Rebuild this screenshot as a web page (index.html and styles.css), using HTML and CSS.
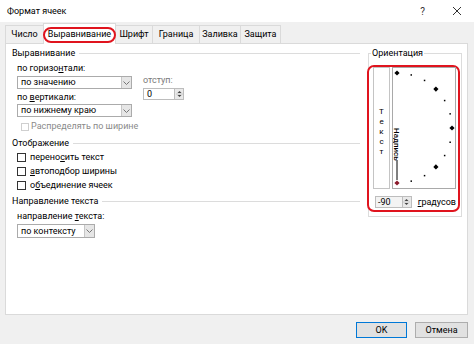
FILE: index.html
```html
<!DOCTYPE html>
<html lang="ru">
<head>
  <meta charset="UTF-8" />
  <title>Формат ячеек</title>
  <link rel="stylesheet" href="styles.css">
</head>
<body>
  <div class="dialog">
    <div class="titlebar">
      <span class="title">Формат ячеек</span>
      <div class="title-btns">
        <span class="help">?</span>
        <svg class="close" width="10" height="10" viewBox="0 0 10 10"><path d="M1 1L9 9M9 1L1 9" stroke="#333" stroke-width="1" fill="none"/></svg>
      </div>
    </div>

    <div class="tabs">
      <div class="tab tab-num">Число</div>
      <div class="tab tab-align active">Выравнивание</div>
      <div class="tab tab-font">Шрифт</div>
      <div class="tab tab-border">Граница</div>
      <div class="tab tab-fill">Заливка</div>
      <div class="tab tab-protect">Защита</div>
    </div>

    <div class="panel">
      <div class="left">
        <div class="group-head">Выравнивание</div>
        <div class="align-row">
          <div class="align-main">
            <div class="lbl">по горизо<u>н</u>тали:</div>
            <div class="select"><span>по значению</span><i class="drop"><svg width="7" height="4" viewBox="0 0 7 4"><path d="M0.5 0.5L3.5 3.5L6.5 0.5" stroke="#777" fill="none"/></svg></i></div>
            <div class="lbl lbl-gap">по <u>в</u>ертикали:</div>
            <div class="select select-tight"><span>по нижнему краю</span><i class="drop"><svg width="7" height="4" viewBox="0 0 7 4"><path d="M0.5 0.5L3.5 3.5L6.5 0.5" stroke="#777" fill="none"/></svg></i></div>
          </div>
          <div class="indent">
            <div class="lbl muted">отступ:</div>
            <div class="spin">
              <span class="spin-field">0</span>
              <i class="arrows"><svg width="7" height="10" viewBox="0 0 7 10"><path d="M1.5 4L3.5 2L5.5 4Z M1.5 6L3.5 8L5.5 6Z" fill="#444"/><path d="M0 5H7" stroke="#c8c8c8"/></svg></i>
            </div>
          </div>
        </div>
        <div class="check disabled"><i class="box"></i><span>Распределять по ширине</span></div>

        <div class="group-head head-gap">Отображение</div>
        <div class="check"><i class="box"></i><span>перено<u>с</u>ить текст</span></div>
        <div class="check"><i class="box"></i><span><u>а</u>втоподбор ширины</span></div>
        <div class="check"><i class="box"></i><span>о<u>б</u>ъединение ячеек</span></div>

        <div class="group-head head-gap-sm">Направление текста</div>
        <div class="lbl">направление <u>т</u>екста:</div>
        <div class="select select-short"><span>по контексту</span><i class="drop"><svg width="7" height="4" viewBox="0 0 7 4"><path d="M0.5 0.5L3.5 3.5L6.5 0.5" stroke="#777" fill="none"/></svg></i></div>
      </div>

      <div class="right">
        <div class="orient">
          <div class="orient-head">Ориентация</div>
          <div class="highlight">
            <div class="orient-boxes">
              <div class="vtext"><span>Т</span><span>е</span><span>к</span><span>с</span><span>т</span></div>
              <div class="dial">
                <svg width="62" height="120" viewBox="0 0 62 120">
                  <g fill="#000">
                    <path d="M4 2.4L6.6 5L4 7.6L1.4 5Z"/>
                    <path d="M42.9 18.5L45.5 21.1L42.9 23.7L40.3 21.1Z"/>
                    <path d="M59 57.4L61.6 60L59 62.6L56.4 60Z"/>
                    <path d="M42.9 96.3L45.5 98.9L42.9 101.5L40.3 98.9Z"/>
                    <rect x="17.5" y="6.2" width="1.5" height="1.5"/>
                    <rect x="30.8" y="11.7" width="1.5" height="1.5"/>
                    <rect x="50.9" y="31.8" width="1.5" height="1.5"/>
                    <rect x="56.4" y="45.1" width="1.5" height="1.5"/>
                    <rect x="56.4" y="73.5" width="1.5" height="1.5"/>
                    <rect x="50.9" y="86.8" width="1.5" height="1.5"/>
                    <rect x="30.8" y="106.9" width="1.5" height="1.5"/>
                    <rect x="17.5" y="112.4" width="1.5" height="1.5"/>
                  </g>
                  <path d="M4 92V112" stroke="#000" stroke-width="1"/>
                  <path d="M4 112.4L6.6 115L4 117.6L1.4 115Z" fill="#8b1a2b"/>
                  <text class="dial-text" transform="translate(0.5 60) rotate(90)">Надпись</text>
                </svg>
              </div>
            </div>
            <div class="deg-row">
              <span class="deg-field">-90</span>
              <i class="arrows"><svg width="7" height="10" viewBox="0 0 7 10"><path d="M1.5 4L3.5 2L5.5 4Z M1.5 6L3.5 8L5.5 6Z" fill="#444"/><path d="M0 5H7" stroke="#c8c8c8"/></svg></i>
              <span class="deg-label"><u>г</u>радусов</span>
            </div>
          </div>
        </div>
      </div>
    </div>

    <div class="footer">
      <button class="btn primary">OK</button>
      <button class="btn wide">Отмена</button>
    </div>
  </div>
</body>
</html>
```

FILE: styles.css
```css
* {
  box-sizing: border-box;
}

body {
  margin: 0;
  font-family: Roboto, "Noto Sans", sans-serif;
  font-size: 9px;
  color: #000;
  background: #fff;
}

u {
  text-decoration-thickness: 1px;
}

.dialog {
  width: 474px;
  height: 344px;
  display: flex;
  flex-direction: column;
  background: #f0f0f0;
}

.titlebar {
  height: 22px;
  flex: none;
  background: #fff;
  display: flex;
  align-items: center;
  justify-content: space-between;
  padding: 0 12px 0 7px;
}

.title-btns {
  display: flex;
  align-items: center;
  gap: 27px;
}

.help {
  font-size: 10px;
  color: #333;
}

.close {
  display: block;
}

/* tabs */
.tabs {
  height: 21px;
  flex: none;
  display: flex;
  align-items: flex-end;
  padding-left: 5px;
}

.tab {
  height: 18px;
  line-height: 17px;
  text-align: center;
  border: 1px solid #dadada;
  border-bottom: none;
  margin-right: -1px;
  background: #f0f0f0;
}

.tab-num { width: 39px; }
.tab-align { width: 73px; }
.tab-font { width: 38px; }
.tab-border { width: 48px; }
.tab-fill { width: 42px; }
.tab-protect { width: 41px; }

.tab.active {
  height: 21px;
  padding-top: 2px;
  background: #fff;
  position: relative;
  z-index: 1;
  margin-bottom: -1px;
}

.tab.active::after {
  content: "";
  position: absolute;
  left: -1px;
  right: -1px;
  top: 3px;
  bottom: 1px;
  border: 2px solid #e0141e;
  border-radius: 8px;
}

/* main panel */
.panel {
  flex: 1;
  margin: 0 6px 0 5px;
  background: #fff;
  border: 1px solid #dadada;
  display: flex;
}

.left {
  width: 354px;
  padding: 3px 0 0 6px;
  display: flex;
  flex-direction: column;
}

.group-head {
  display: flex;
  align-items: center;
  gap: 4px;
  line-height: 13px;
}

.group-head::after {
  content: "";
  flex: 1;
  height: 1px;
  background: #dcdcdc;
}

.head-gap {
  margin-top: 4px;
}

.head-gap-sm {
  margin-top: 3px;
}

.lbl {
  line-height: 13px;
  padding-left: 5px;
  margin-top: 2px;
}

.lbl.muted {
  color: #7a7a7a;
  padding-left: 0;
  margin-top: 0;
}

.align-row {
  display: flex;
}

.align-main {
  width: 120px;
  display: flex;
  flex-direction: column;
}

.select {
  height: 13px;
  width: 115px;
  margin: 1px 0 0 5px;
  border: 1px solid #ababab;
  background: #fff;
  display: flex;
  align-items: center;
  justify-content: space-between;
  padding-left: 3px;
  line-height: 11px;
}

.select-tight {
  margin-top: 0;
}

.select-short {
  width: 78px;
  height: 14px;
}

.drop {
  width: 10px;
  height: 100%;
  border-left: 1px solid #c6c6c6;
  background: #e6e6e6;
  display: flex;
  align-items: center;
  justify-content: center;
}

.indent {
  margin-left: 11px;
  padding-top: 14px;
}

.spin {
  display: flex;
  height: 12px;
  margin-top: 1px;
}

.spin-field {
  width: 32px;
  border: 1px solid #bdbdbd;
  padding-left: 3px;
  line-height: 10px;
}

.arrows {
  width: 9px;
  border: 1px solid #bdbdbd;
  border-left: none;
  background: #e9e9e9;
  display: flex;
  align-items: center;
  justify-content: center;
}

.check {
  display: flex;
  align-items: center;
  gap: 4px;
  line-height: 13px;
  padding-left: 5px;
  margin-top: 1px;
}

.box {
  width: 9px;
  height: 9px;
  border: 1px solid #333;
  background: #fff;
}

.check.disabled {
  color: #8a8a8a;
  padding-left: 9px;
  gap: 2px;
  margin-top: 3px;
}

.check.disabled .box {
  width: 8px;
  height: 8px;
  border-color: #cfcfcf;
}

/* orientation */
.right {
  width: 94px;
  margin-left: 8px;
  padding-top: 9px;
}

.orient {
  border: 1px solid #dcdcdc;
  padding-bottom: 4px;
}

.orient-head {
  display: inline-block;
  line-height: 13px;
  margin: -7px 0 0 2px;
  padding: 0 1px;
  background: #fff;
  vertical-align: top;
}

.highlight {
  width: 93px;
  margin: 1px 0 0 -2px;
  border: 2px solid #e0141e;
  border-radius: 7px;
  padding: 0 2px 2px 4px;
}

.orient-boxes {
  display: flex;
  gap: 2px;
  height: 122px;
}

.vtext {
  width: 17px;
  border: 1px solid #c4c4c4;
  display: flex;
  flex-direction: column;
  align-items: center;
  justify-content: center;
  padding-top: 8px;
  font-size: 8px;
  line-height: 10px;
}

.dial {
  width: 64px;
  border: 1px solid #a9a9a9;
}

.dial svg {
  display: block;
}

.dial-text {
  font-family: Roboto, "Noto Sans", sans-serif;
  font-size: 8px;
  font-weight: 500;
}

.deg-row {
  display: flex;
  height: 12px;
  margin-top: 7px;
  padding-left: 2px;
}

.deg-field {
  width: 28px;
  border: 1px solid #bdbdbd;
  padding-left: 2px;
  line-height: 10px;
  background: #f3f3f3;
}

.deg-label {
  margin-left: 6px;
  line-height: 12px;
}

/* footer */
.footer {
  height: 29px;
  flex: none;
  display: flex;
  justify-content: flex-end;
  align-items: flex-start;
  gap: 8px;
  padding: 7px 6px 0 0;
}

.btn {
  width: 51px;
  height: 16px;
  padding: 0;
  border: 1px solid #adadad;
  background: #e1e1e1;
  font-family: inherit;
  font-size: 9px;
  color: #000;
}

.btn.primary {
  border-color: #0078d7;
}

.btn.wide {
  width: 53px;
}
```
